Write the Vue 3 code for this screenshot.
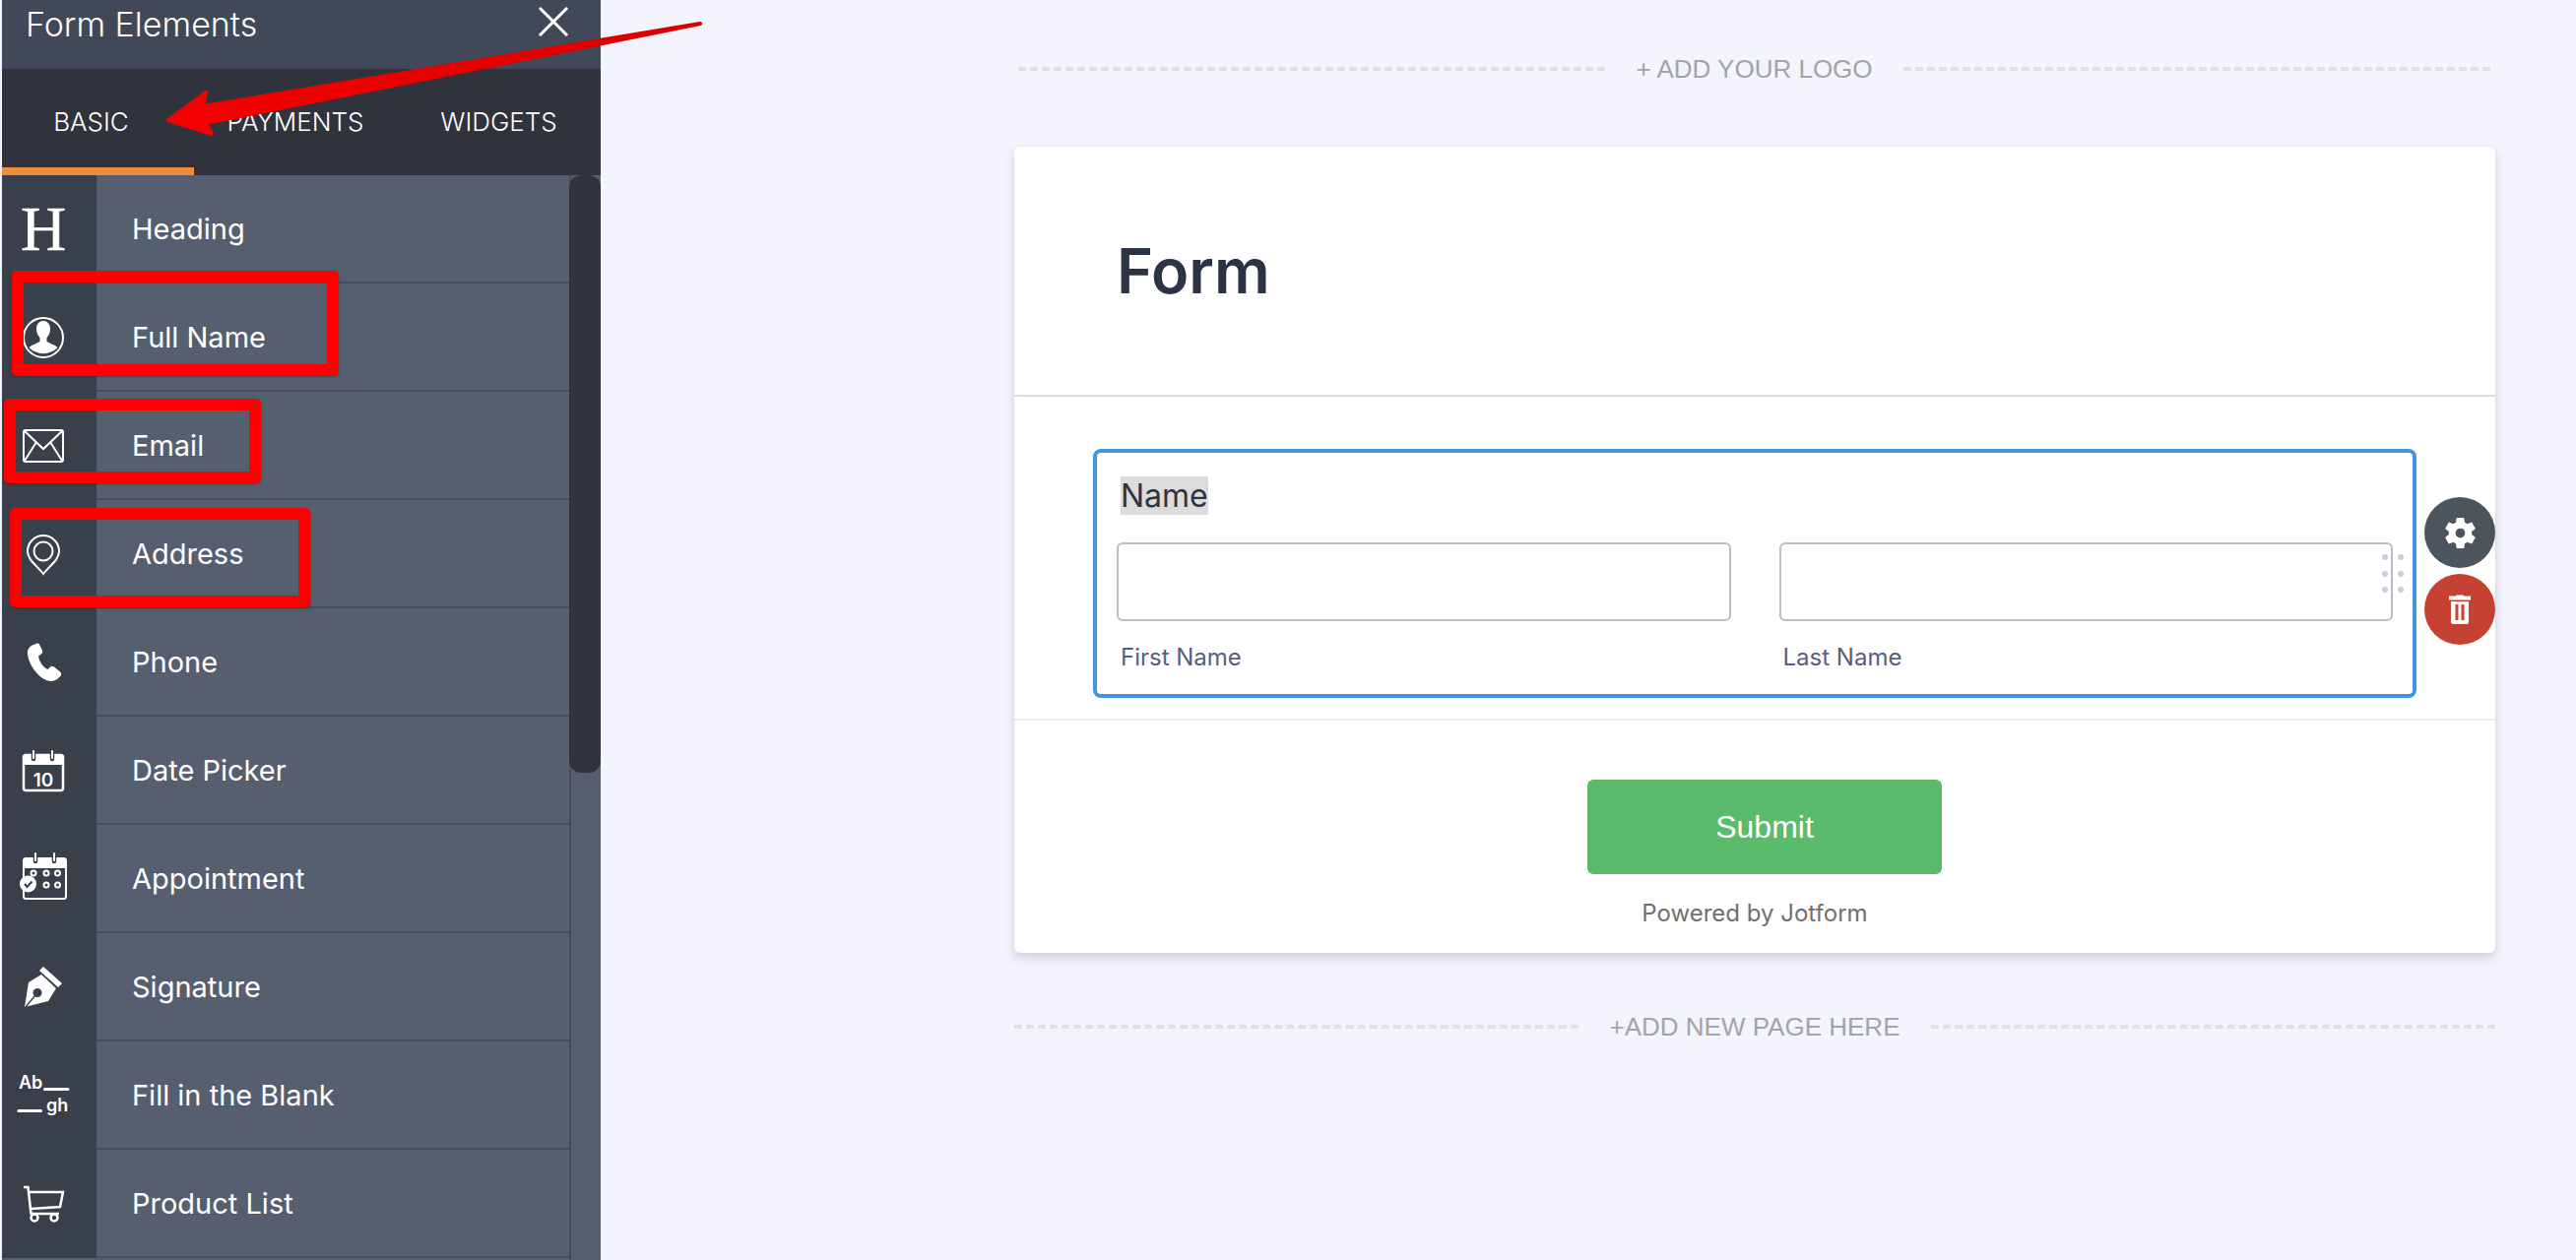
<script setup>
const items = [
  { id: 'heading', label: 'Heading' },
  { id: 'name', label: 'Full Name' },
  { id: 'email', label: 'Email' },
  { id: 'address', label: 'Address' },
  { id: 'phone', label: 'Phone' },
  { id: 'date', label: 'Date Picker' },
  { id: 'appointment', label: 'Appointment' },
  { id: 'signature', label: 'Signature' },
  { id: 'blank', label: 'Fill in the Blank' },
  { id: 'cart', label: 'Product List' }
]
</script>

<template>
  <div class="page">
    <aside class="sidebar">
      <header class="side-head">
        <span>Form Elements</span>
        <svg class="close" width="32" height="30" viewBox="0 0 32 30">
          <path d="M2 1 L30 29 M30 1 L2 29" stroke="#fff" stroke-width="3" fill="none" />
        </svg>
      </header>
      <nav class="tabs">
        <div class="tab tab-basic">BASIC</div>
        <div class="tab tab-pay">PAYMENTS</div>
        <div class="tab tab-wid">WIDGETS</div>
      </nav>
      <div class="scroller">
        <ul class="list">
          <li v-for="item in items" :key="item.id" class="row">
            <div class="ico">
              <span v-if="item.id === 'heading'" class="ico-h">H</span>
              <svg v-else-if="item.id === 'name'" width="48" height="48" viewBox="0 0 48 48">
                <circle cx="24" cy="24" r="20" fill="none" stroke="#fff" stroke-width="2" />
                <path fill="#fff" d="M24 7c-4 0-7 3-7 8 0 4 1.500 7 3.500 9v4c-3 2-8 3-11 6a20 20 0 0 0 29 0c-3-3-8-4-11-6v-4c2-2 3.500-5 3.500-9 0-5-3-8-7-8z" />
              </svg>
              <svg v-else-if="item.id === 'email'" width="48" height="48" viewBox="0 0 48 48" fill="none" stroke="#fff" stroke-width="2">
                <rect x="4" y="8" width="40" height="32" rx="2" />
                <path d="M5 9 L24 27 L43 9 M5 39 L17 20 M43 39 L31 20" />
              </svg>
              <svg v-else-if="item.id === 'address'" width="48" height="48" viewBox="0 0 48 48" fill="none" stroke="#fff" stroke-width="2">
                <path d="M24 44C18 36 8 30 8 21A16 16 0 0 1 40 21C40 30 30 36 24 44Z" />
                <circle cx="24" cy="21" r="9.500" />
              </svg>
              <svg v-else-if="item.id === 'phone'" width="48" height="48" viewBox="0 0 48 48">
                <path fill="#fff" d="M14 6c-2 .5-6 3-6 8 0 12 13 29 24 29 2 0 7-1.500 10-6 .5-1.500 0-2.500-1-3.500l-6-5c-1.500-1-3-1-4 0l-2.500 2.500c-5-2-9-9-9.500-13.500l3-2c1.200-1 1.500-2 1-3.500l-3-6.500c-.7-1-2-1.300-3.500-.5z" />
              </svg>
              <svg v-else-if="item.id === 'date'" width="48" height="48" viewBox="0 0 48 48">
                <rect x="4" y="8" width="40" height="36" rx="2.500" fill="none" stroke="#fff" stroke-width="2.500" />
                <path fill="#fff" d="M4 10a3 3 0 0 1 3-3h34a3 3 0 0 1 3 3v8H4z" />
                <path d="M14 4v8M33 4v8" stroke="#3a404b" stroke-width="4.500" stroke-linecap="round" />
                <path d="M14 4v7M33 4v7" stroke="#fff" stroke-width="2" stroke-linecap="round" />
                <text x="24" y="40" text-anchor="middle" class="cal-num">10</text>
              </svg>
              <svg v-else-if="item.id === 'appointment'" class="over" width="48" height="48" viewBox="0 0 48 48">
                <rect x="4" y="3" width="43" height="41" rx="2.500" fill="none" stroke="#fff" stroke-width="2" />
                <path fill="#fff" d="M4 5a3 3 0 0 1 3-3h37a3 3 0 0 1 3 3v8H4z" />
                <path d="M16-3v9M35-3v9" stroke="#3a404b" stroke-width="4.500" stroke-linecap="round" />
                <path d="M16-2v7M35-2v7" stroke="#fff" stroke-width="2" stroke-linecap="round" />
                <g fill="none" stroke="#fff" stroke-width="2">
                  <circle cx="14" cy="18" r="2.500" />
                  <circle cx="27" cy="18" r="2.500" />
                  <circle cx="38.500" cy="18" r="2.500" />
                  <circle cx="27" cy="30" r="2.500" />
                  <circle cx="38.500" cy="30" r="2.500" />
                </g>
                <circle cx="8.500" cy="29" r="8.500" fill="#fff" />
                <path d="M5 29l2.500 3 5-5.500" fill="none" stroke="#3a404b" stroke-width="2" />
              </svg>
              <svg v-else-if="item.id === 'signature'" width="48" height="48" viewBox="0 0 48 48">
                <path fill="#fff" fill-rule="evenodd" d="M5 44 L9 19 L22 11 L37 25 L29 38 Z M18 25a4.500 4.500 0 1 0 0 9a4.500 4.500 0 1 0 0-9z" />
                <path d="M6 44 L16 32" stroke="#3a404b" stroke-width="1.500" />
                <path fill="#fff" d="M20 7 L24 3 L43 20 L39 24 Z" />
              </svg>
              <svg v-else-if="item.id === 'blank'" class="over" width="48" height="48" viewBox="0 0 48 48">
                <text x="-1" y="17" class="ab">Ab</text>
                <text x="27" y="40" class="ab">gh</text>
                <path d="M25.500 17.500H49M-1 39.500H21.500" stroke="#fff" stroke-width="3" stroke-linecap="round" />
              </svg>
              <svg v-else width="48" height="48" viewBox="0 0 48 48" fill="none" stroke="#fff" stroke-width="2.500">
                <path d="M4 7H8.500L11.500 34H40M9 12H44L41 27L11 29" />
                <circle cx="15" cy="38" r="3.500" />
                <circle cx="35" cy="38" r="3.500" />
              </svg>
            </div>
            <div class="row-label">{{ item.label }}</div>
          </li>
        </ul>
        <div class="track"><div class="thumb"></div></div>
      </div>
    </aside>

    <main class="main">
      <div class="add-row add-logo">
        <span class="dash"></span>
        <span class="add-text">+ ADD YOUR LOGO</span>
        <span class="dash"></span>
      </div>

      <section class="card">
        <div class="card-head"><h1>Form</h1></div>
        <div class="card-body">
          <div class="field">
            <div class="field-label"><span>Name</span></div>
            <div class="inputs">
              <div>
                <div class="input"></div>
                <div class="sub">First Name</div>
              </div>
              <div>
                <div class="input"></div>
                <div class="sub">Last Name</div>
              </div>
            </div>
            <div class="grip">
              <i v-for="n in 6" :key="n"></i>
            </div>
          </div>
          <div class="actions">
            <button class="round gear">
              <svg width="39" height="39" viewBox="0 0 24 24">
                <path fill="#fff" fill-rule="evenodd" d="M19.140 12.940c.04-.3.06-.61.06-.94 0-.32-.02-.64-.07-.94l2.030-1.580c.18-.14.23-.41.12-.61l-1.920-3.320c-.12-.22-.37-.29-.59-.22l-2.390.96c-.5-.38-1.030-.7-1.620-.94l-.36-2.540c-.04-.24-.24-.41-.48-.41h-3.840c-.24 0-.43.17-.47.41l-.36 2.540c-.59.24-1.130.57-1.620.94l-2.390-.96c-.22-.08-.47 0-.59.22L2.740 8.870c-.12.21-.08.47.12.61l2.030 1.580c-.05.3-.09.63-.09.94s.02.64.07.94l-2.030 1.580c-.18.14-.23.41-.12.61l1.920 3.320c.12.22.37.29.59.22l2.390-.96c.5.38 1.030.7 1.620.94l.36 2.540c.05.24.24.41.48.41h3.840c.24 0 .44-.17.47-.41l.36-2.540c.59-.24 1.130-.56 1.620-.94l2.390.96c.22.08.47 0 .59-.22l1.920-3.320c.12-.22.07-.47-.12-.61l-2.010-1.580zM12 15a3 3 0 1 1 0-6 3 3 0 1 1 0 6z" />
              </svg>
            </button>
            <button class="round trash">
              <svg width="24" height="32" viewBox="0 0 24 32">
                <path fill="#fff" fill-rule="evenodd" d="M8 2.500a1 1 0 0 1 1-1h6a1 1 0 0 1 1 1H23v4H1v-4zM3 8h18v21a2 2 0 0 1-2 2H5a2 2 0 0 1-2-2zM7.500 11v16h3V11zM13.500 11v16h3V11z" />
              </svg>
            </button>
          </div>
        </div>
        <div class="card-foot">
          <button class="submit">Submit</button>
          <div class="powered">Powered by Jotform</div>
        </div>
      </section>

      <div class="add-row add-page">
        <span class="dash"></span>
        <span class="add-text">+ADD NEW PAGE HERE</span>
        <span class="dash"></span>
      </div>
    </main>

    <!-- screenshot annotations -->
    <div class="mark mark-1"></div>
    <div class="mark mark-2"></div>
    <div class="mark mark-3"></div>
    <svg class="arrow" width="720" height="150" viewBox="0 0 720 150">
      <defs>
        <linearGradient id="arrowFill" x1="0" y1="0" x2="1" y2="0">
          <stop offset="0" stop-color="#f60000" />
          <stop offset="1" stop-color="#d80000" />
        </linearGradient>
      </defs>
      <path fill="url(#arrowFill)" stroke="url(#arrowFill)" stroke-width="4" stroke-linejoin="round" d="M711 24 L206 108 L209 94 L171 122 L215 136 L209 125 Z" />
    </svg>
  </div>
</template>

<style>
html, body { margin: 0; background: #f3f4fd; }
</style>

<style scoped>
.page {
  position: relative;
  display: flex;
  height: 1280px;
  overflow: hidden;
  background: #f3f4fd;
  font-family: Inter, "Noto Sans", sans-serif;
}
.sidebar {
  width: 608px;
  margin-left: 2px;
  flex: none;
  display: flex;
  flex-direction: column;
  background: #565f6f;
  color: #fff;
}
.side-head {
  height: 70px;
  flex: none;
  display: flex;
  align-items: flex-start;
  justify-content: space-between;
  padding: 6px 32px 0 24px;
  box-sizing: border-box;
  background: #414857;
  font-size: 34px;
  font-weight: 300;
  line-height: 38px;
}
.close { margin-top: 1px; }
.tabs {
  height: 108px;
  flex: none;
  display: flex;
  background: #30333c;
  font-size: 26px;
  font-weight: 300;
  line-height: 30px;
}
.tab { padding-top: 39px; text-align: center; box-sizing: border-box; }
.tab-basic {
  width: 195px;
  padding-right: 14px;
  border-bottom: 8px solid #f08c3a;
}
.tab-pay { width: 206px; }
.tab-wid { width: 207px; }
.scroller {
  flex: 1;
  display: flex;
  min-height: 0;
}
.list {
  width: 576px;
  flex: none;
  margin: 0;
  padding: 0;
  list-style: none;
}
.row {
  height: 110px;
  display: flex;
  box-sizing: border-box;
  border-bottom: 2px solid #454c5a;
}
.ico {
  width: 96px;
  flex: none;
  display: flex;
  align-items: center;
  padding-left: 18px;
  box-sizing: border-box;
  background: #3a404b;
  margin-bottom: -2px;
}
.ico svg { overflow: visible; flex: none; }
.ico-h {
  width: 48px;
  text-align: center;
  font-family: "Liberation Serif", serif;
  font-size: 64px;
  line-height: 64px;
  color: #fff;
  -webkit-text-stroke: 0.4px #fff;
}
.cal-num { font-family: Inter, sans-serif; font-size: 19px; font-weight: 600; fill: #fff; }
.ab { font-family: Inter, sans-serif; font-size: 18px; font-weight: 600; fill: #fff; }
.row-label {
  display: flex;
  align-items: center;
  padding-left: 36px;
  font-size: 29px;
  font-weight: 400;
}
.track {
  flex: 1;
  border-left: 2px solid #454c5a;
  position: relative;
}
.thumb {
  position: absolute;
  top: 0;
  left: -2px;
  right: 0;
  height: 607px;
  background: #30333c;
  border-radius: 12px;
}

.main {
  width: 1504px;
  margin-left: 420px;
  flex: none;
  display: flex;
  flex-direction: column;
}
.add-row {
  display: flex;
  align-items: center;
  color: #a3a3a8;
  font-family: "Liberation Sans", sans-serif;
  font-size: 26px;
}
.dash {
  flex: 1;
  height: 0;
  border-top: 4px dashed #dfe0ea;
}
.add-logo {
  height: 40px;
  margin-top: 50px;
  padding: 0 5px 0 4px;
  gap: 31px;
}
.add-page {
  height: 40px;
  margin-top: 55px;
  gap: 32px;
}
.card {
  margin-top: 59px;
  height: 819px;
  background: #fff;
  border-radius: 6px;
  box-shadow: 0 6px 12px rgba(43, 50, 80, 0.16), 0 0 4px rgba(43, 50, 80, 0.06);
  display: flex;
  flex-direction: column;
}
.card-head {
  height: 254px;
  flex: none;
  box-sizing: border-box;
  padding: 88px 0 0 104px;
  border-bottom: 2px solid #dcdce6;
}
.card-head h1 {
  margin: 0;
  font-size: 63px;
  line-height: 76px;
  font-weight: 600;
  color: #2c3345;
}
.card-body {
  position: relative;
  height: 329px;
  flex: none;
  box-sizing: border-box;
  padding: 53px 80px 0;
  border-bottom: 2px solid #e8ecf4;
}
.field {
  position: relative;
  height: 253px;
  box-sizing: border-box;
  border: 4px solid #4293e0;
  border-radius: 8px;
  padding: 24px 20px 0 20px;
}
.field-label { padding-left: 4px; height: 67px; }
.field-label span {
  display: inline-block;
  background: #dcdcdc;
  color: #2c3345;
  font-size: 32px;
  line-height: 39px;
}
.inputs {
  display: grid;
  grid-template-columns: 1fr 1fr;
  gap: 49px;
}
.input {
  height: 80px;
  box-sizing: border-box;
  border: 2px solid #b8bdc9;
  border-radius: 6px;
}
.sub {
  margin-top: 22px;
  padding-left: 4px;
  font-size: 24px;
  line-height: 30px;
  color: #57607a;
}
.grip {
  position: absolute;
  top: 103px;
  left: 1305px;
  display: grid;
  grid-template-columns: 6px 6px;
  column-gap: 10px;
  row-gap: 10.500px;
}
.grip i { width: 6px; height: 6px; border-radius: 50%; background: #c8cedd; }
.actions {
  position: absolute;
  top: 102px;
  right: 0;
  display: flex;
  flex-direction: column;
  gap: 6px;
}
.round {
  width: 72px;
  height: 72px;
  padding: 0;
  border: 0;
  border-radius: 50%;
  display: flex;
  align-items: center;
  justify-content: center;
}
.gear { background: #4c545e; }
.trash { background: #c54132; }
.card-foot {
  flex: 1;
  display: flex;
  flex-direction: column;
  align-items: center;
  padding-top: 60px;
}
.submit {
  width: 360px;
  height: 96px;
  margin-left: 20px;
  border: 0;
  border-radius: 6px;
  background: #59bb6b;
  color: #fff;
  font-family: "Liberation Sans", sans-serif;
  font-size: 32px;
}
.powered {
  margin-top: 24px;
  font-size: 24px;
  line-height: 32px;
  color: #6f6f6f;
}

.mark {
  position: absolute;
  box-sizing: border-box;
  border: 12px solid #ff0000;
  border-radius: 5px;
  box-shadow: 0 1px 2px rgba(0, 0, 0, 0.3);
}
.mark-1 { left: 12px; top: 275px; width: 332px; height: 107px; }
.mark-2 { left: 4px; top: 405px; width: 261px; height: 86px; }
.mark-3 { left: 10px; top: 516px; width: 305px; height: 101px; }
.arrow {
  position: absolute;
  left: 0;
  top: 0;
}
</style>
